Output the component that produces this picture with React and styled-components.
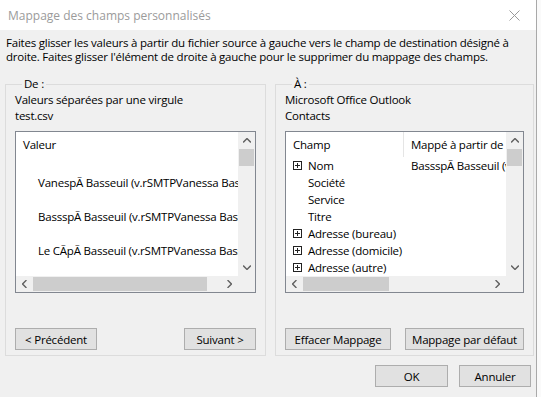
import React from "react";
import styled, { createGlobalStyle } from "styled-components";

const GlobalStyle = createGlobalStyle`
  html, body {
    margin: 0;
    padding: 0;
    background: #ffffff;
    overflow: hidden;
  }
  body {
    font-family: "Open Sans", "Noto Sans", sans-serif;
    font-size: 11.5px;
    letter-spacing: -0.22px;
    color: #000;
  }
`;

const Backdrop = styled.div`
  width: 541px;
  height: 397px;
  display: flex;
  background: #fafafa;
`;

const Window = styled.div`
  width: 536px;
  height: 400px;
  display: flex;
  flex-direction: column;
  border-right: 1px solid #a9a9a9;
  background: #f0f0f0;
`;

const TitleBar = styled.div`
  height: 30px;
  flex: none;
  display: flex;
  align-items: center;
  justify-content: space-between;
  background: #fff;
  padding-left: 8px;
`;

const Title = styled.span`
  color: #9b9b9b;
  font-size: 12px;
  letter-spacing: 0;
`;

const CloseBox = styled.div`
  width: 44px;
  height: 30px;
  display: flex;
  align-items: center;
  justify-content: center;
`;

const Body = styled.div`
  flex: 1;
  display: flex;
  flex-direction: column;
  padding: 6px 3px 0 5px;
`;

const Instructions = styled.p`
  margin: 0 0 12px 1px;
  line-height: 14px;
  white-space: nowrap;
`;

const Groups = styled.div`
  display: grid;
  grid-template-columns: 261px 259px;
  column-gap: 9px;
`;

const Group = styled.fieldset`
  margin: 0;
  padding: 0 9px 5px 9px;
  border: 1px solid #dcdcdc;
  min-width: 0;
  display: flex;
  flex-direction: column;
`;

const Legend = styled.legend`
  padding: 0 2px;
  margin-left: 7px;
  line-height: 16px;
`;

const Label = styled.div`
  line-height: 16px;
  white-space: nowrap;
`;

const ListView = styled.div`
  margin-top: 7px;
  height: 160px;
  border: 1px solid #828790;
  background: #fff;
  display: grid;
  grid-template-columns: 1fr 17px;
  grid-template-rows: 1fr 16px;
  overflow: hidden;
`;

const ListContent = styled.div`
  overflow: hidden;
  min-width: 0;
`;

const Header = styled.div`
  height: 25px;
  display: flex;
  align-items: center;
  white-space: nowrap;
`;

const HeaderCell = styled.div`
  width: ${(p) => p.$width || "auto"};
  flex: none;
  height: 25px;
  display: flex;
  align-items: center;
  padding-left: 7px;
  box-sizing: border-box;
  border-right: ${(p) => (p.$sep ? "1px solid #e5e5e5" : "none")};
`;

const ValueRow = styled.div`
  height: 34px;
  display: flex;
  align-items: flex-end;
  padding-left: 22px;
  white-space: nowrap;
`;

const ValueText = styled.span`
  line-height: 17px;
`;

const FieldRow = styled.div`
  height: 17px;
  display: flex;
  align-items: center;
  white-space: nowrap;
`;

const FieldName = styled.div`
  width: 118px;
  flex: none;
  display: flex;
  align-items: center;
  padding-left: 7px;
  box-sizing: border-box;
`;

const Expander = styled.span`
  width: 9px;
  height: 9px;
  flex: none;
  margin-right: 6px;
  box-sizing: border-box;
  border: 1px solid #222;
  position: relative;
  visibility: ${(p) => (p.$hidden ? "hidden" : "visible")};
  &::before,
  &::after {
    content: "";
    position: absolute;
    background: #222;
  }
  &::before {
    left: 1px;
    right: 1px;
    top: 3px;
    height: 1px;
  }
  &::after {
    top: 1px;
    bottom: 1px;
    left: 3px;
    width: 1px;
  }
`;

const MappedCell = styled.div`
  padding-left: 7px;
`;

const VScroll = styled.div`
  background: #f0f0f0;
  display: flex;
  flex-direction: column;
`;

const HScroll = styled.div`
  background: #f0f0f0;
  display: flex;
`;

const Corner = styled.div`
  background: #f0f0f0;
`;

const ArrowBtn = styled.div`
  width: 17px;
  height: ${(p) => (p.$vertical ? "17px" : "16px")};
  flex: none;
  display: flex;
  align-items: center;
  justify-content: center;
`;

const Track = styled.div`
  flex: 1;
  display: flex;
  flex-direction: ${(p) => (p.$vertical ? "column" : "row")};
`;

const Thumb = styled.div`
  background: #cdcdcd;
  margin: ${(p) => (p.$vertical ? "0 1px" : "1px 0")};
  ${(p) =>
    p.$vertical ? `height: ${p.$size}px;` : `width: ${p.$size}px; margin-left: ${p.$offset}px;`}
`;

const ButtonRow = styled.div`
  margin-top: 35px;
  display: flex;
  justify-content: space-between;
`;

const Button = styled.button`
  font: inherit;
  letter-spacing: inherit;
  height: 22px;
  width: ${(p) => p.$width}px;
  padding: 0;
  background: #e1e1e1;
  border: 1px solid #adadad;
  color: #000;
  white-space: nowrap;
`;

const Footer = styled.div`
  margin-top: 9px;
  display: flex;
  justify-content: flex-end;
  gap: 11px;
  padding-right: 2px;
`;

const Chevron = ({ dir }) => {
  const pts = {
    up: "0,4 3.5,0.5 7,4",
    down: "0,0.5 3.5,4 7,0.5",
    left: "4,0 0.5,3.5 4,7",
    right: "0.5,0 4,3.5 0.5,7",
  }[dir];
  const vertical = dir === "up" || dir === "down";
  return (
    <svg width={vertical ? 8 : 5} height={vertical ? 5 : 8} viewBox={vertical ? "0 0 7 4.5" : "0 0 4.5 7"}>
      <polyline points={pts} fill="none" stroke="#606060" strokeWidth="1.3" />
    </svg>
  );
};

const Scrollbars = ({ hThumb, hOffset }) => (
  <>
    <VScroll>
      <ArrowBtn $vertical>
        <Chevron dir="up" />
      </ArrowBtn>
      <Track $vertical>
        <Thumb $vertical $size={17} />
      </Track>
      <ArrowBtn $vertical>
        <Chevron dir="down" />
      </ArrowBtn>
    </VScroll>
    <HScroll>
      <ArrowBtn>
        <Chevron dir="left" />
      </ArrowBtn>
      <Track>
        <Thumb $size={hThumb} $offset={hOffset} />
      </Track>
      <ArrowBtn>
        <Chevron dir="right" />
      </ArrowBtn>
    </HScroll>
    <Corner />
  </>
);

const values = [
  "VanespÃ Basseuil (v.rSMTPVanessa Basseuil",
  "BassspÃ Basseuil (v.rSMTPVanessa Basseuil",
  "Le CÃpÃ Basseuil (v.rSMTPVanessa Basseuil",
];

const fields = [
  { name: "Nom", expand: true, mapped: "BassspÃ Basseuil (v.rSMTP" },
  { name: "Société" },
  { name: "Service" },
  { name: "Titre" },
  { name: "Adresse (bureau)", expand: true },
  { name: "Adresse (domicile)", expand: true },
  { name: "Adresse (autre)", expand: true },
];

export default function App() {
  return (
    <>
      <GlobalStyle />
      <Backdrop>
        <Window>
          <TitleBar>
            <Title>Mappage des champs personnalisés</Title>
            <CloseBox>
              <svg width="11" height="11" viewBox="0 0 11 11">
                <path d="M0.5 0.5 L10.5 10.5 M10.5 0.5 L0.5 10.5" stroke="#9a9a9a" strokeWidth="1" />
              </svg>
            </CloseBox>
          </TitleBar>
          <Body>
            <Instructions>
              Faites glisser les valeurs à partir du fichier source à gauche vers le champ de destination désigné à
              <br />
              droite. Faites glisser l'élément de droite à gauche pour le supprimer du mappage des champs.
            </Instructions>
            <Groups>
              <Group>
                <Legend>De :</Legend>
                <Label>Valeurs séparées par une virgule</Label>
                <Label>test.csv</Label>
                <ListView>
                  <ListContent>
                    <Header>
                      <HeaderCell>Valeur</HeaderCell>
                    </Header>
                    {values.map((v) => (
                      <ValueRow key={v}>
                        <ValueText>{v}</ValueText>
                      </ValueRow>
                    ))}
                  </ListContent>
                  <Scrollbars hThumb={174} hOffset={0} />
                </ListView>
                <ButtonRow>
                  <Button $width={82}>&lt; Précédent</Button>
                  <Button $width={72}>Suivant &gt;</Button>
                </ButtonRow>
              </Group>
              <Group>
                <Legend>À :</Legend>
                <Label>Microsoft Office Outlook</Label>
                <Label>Contacts</Label>
                <ListView>
                  <ListContent>
                    <Header>
                      <HeaderCell $width="118px" $sep>
                        Champ
                      </HeaderCell>
                      <HeaderCell>Mappé à partir de</HeaderCell>
                    </Header>
                    {fields.map((f) => (
                      <FieldRow key={f.name}>
                        <FieldName>
                          <Expander $hidden={!f.expand} />
                          {f.name}
                        </FieldName>
                        {f.mapped && <MappedCell>{f.mapped}</MappedCell>}
                      </FieldRow>
                    ))}
                  </ListContent>
                  <Scrollbars hThumb={86} hOffset={0} />
                </ListView>
                <ButtonRow>
                  <Button $width={106}>Effacer Mappage</Button>
                  <Button $width={119}>Mappage par défaut</Button>
                </ButtonRow>
              </Group>
            </Groups>
            <Footer>
              <Button $width={73}>OK</Button>
              <Button $width={72}>Annuler</Button>
            </Footer>
          </Body>
        </Window>
      </Backdrop>
    </>
  );
}
